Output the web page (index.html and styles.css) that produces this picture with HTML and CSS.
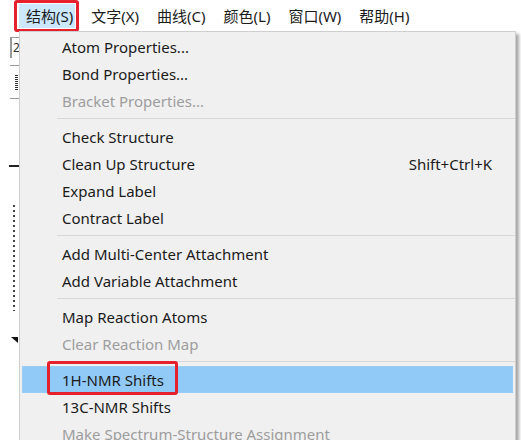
FILE: index.html
```html
<!DOCTYPE html>
<html>
<head>
<meta charset="utf-8">
<link rel="stylesheet" href="styles.css">
</head>
<body>
<div class="app">
  <div class="menubar">
    <div class="mitem active">结构(S)</div>
    <div class="mitem">文字(X)</div>
    <div class="mitem">曲线(C)</div>
    <div class="mitem">颜色(L)</div>
    <div class="mitem">窗口(W)</div>
    <div class="mitem">帮助(H)</div>
  </div>
  <div class="workspace">
    <div class="sizebox">2</div>
    <div class="tb-line tb1"></div>
    <div class="grip"></div>
    <div class="tb-line tb2"></div>
    <div class="dash"></div>
    <div class="dots"></div>
    <div class="tri"></div>
  </div>

  <div class="dropdown">
    <div class="row">Atom Properties...</div>
    <div class="row">Bond Properties...</div>
    <div class="row disabled">Bracket Properties...</div>
    <div class="sep"></div>
    <div class="row">Check Structure</div>
    <div class="row"><span>Clean Up Structure</span><span class="key">Shift+Ctrl+K</span></div>
    <div class="row">Expand Label</div>
    <div class="row">Contract Label</div>
    <div class="sep"></div>
    <div class="row">Add Multi-Center Attachment</div>
    <div class="row">Add Variable Attachment</div>
    <div class="sep"></div>
    <div class="row">Map Reaction Atoms</div>
    <div class="row disabled">Clear Reaction Map</div>
    <div class="sep"></div>
    <div class="row hot"><span class="mark">1H-NMR Shifts</span></div>
    <div class="row">13C-NMR Shifts</div>
    <div class="row disabled">Make Spectrum-Structure Assignment</div>
  </div>
</div>
</body>
</html>
```
FILE: styles.css
```css
html, body {
  margin: 0;
  padding: 0;
  background: #ffffff;
  font-family: "Noto Sans", "Noto Sans CJK SC", sans-serif;
  font-size: 15px;
  color: #1b1b1b;
  overflow: hidden;
}
.app {
  position: relative;
  width: 521px;
  height: 440px;
}
.menubar {
  display: flex;
  align-items: center;
  height: 32px;
  padding-left: 19px;
  gap: 4px;
}
.mitem {
  height: 24px;
  line-height: 24px;
  padding: 0 7px;
  white-space: nowrap;
}
.mitem.active {
  position: relative;
  background: #cce8ff;
  padding: 0 2px 0 7px;
  margin-right: 5px;
}
.mitem.active::after {
  content: "";
  position: absolute;
  left: -5px;
  top: -4px;
  right: -4px;
  bottom: -4px;
  border: 3px solid #e5212d;
  border-radius: 3px;
}
.workspace {
  position: relative;
  height: 408px;
}
.sizebox {
  position: absolute;
  left: 10px;
  top: 5px;
  width: 9px;
  height: 20px;
  border-left: 2px solid #9a9a9a;
  border-top: 1px solid #9a9a9a;
  font-size: 12px;
  line-height: 20px;
  padding-left: 1px;
  overflow: hidden;
  color: #333;
}
.tb-line {
  position: absolute;
  left: 10px;
  width: 9px;
  height: 1px;
  background: #9a9a9a;
}
.tb1 { top: 33px; }
.tb2 { top: 66px; }
.grip {
  position: absolute;
  left: 15px;
  top: 43px;
  width: 3px;
  height: 16px;
  background: repeating-linear-gradient(#333 0 1px, transparent 1px 2px);
}
.dash {
  position: absolute;
  left: 9px;
  top: 133px;
  width: 10px;
  height: 2px;
  background: #222;
}
.dots {
  position: absolute;
  left: 13px;
  top: 173px;
  width: 2px;
  height: 106px;
  background: repeating-linear-gradient(#444 0 2px, transparent 2px 5px);
}
.tri {
  position: absolute;
  left: 11px;
  top: 305px;
  width: 0;
  height: 0;
  border-left: 7px solid transparent;
  border-top: 6px solid #111;
}
.dropdown {
  position: absolute;
  left: 19px;
  top: 31px;
  width: 497px;
  height: 420px;
  background: #f0f0f0;
  border: 1px solid #cfcfcf;
  box-shadow: 3px 3px 3px rgba(0, 0, 0, 0.35);
  padding-top: 1px;
  box-sizing: border-box;
}
.row {
  display: flex;
  justify-content: space-between;
  align-items: center;
  height: 27px;
  margin: 0 2px;
  padding: 0 20px 0 39px;
  white-space: nowrap;
  border: 1px solid transparent;
  box-sizing: border-box;
}
.row.disabled {
  color: #9d9d9d;
}
.row.hot {
  background: #91c9f7;
  border-color: #99cdf6;
}
.key {
  color: #1b1b1b;
}
.mark {
  position: relative;
  line-height: 20px;
}
.mark::after {
  content: "";
  position: absolute;
  left: -15px;
  top: -9px;
  right: -14px;
  bottom: -5px;
  border: 3px solid #e5212d;
  border-radius: 3px;
}
.sep {
  height: 1px;
  background: #d7d7d7;
  margin: 4px 0 4px 37px;
}
```
